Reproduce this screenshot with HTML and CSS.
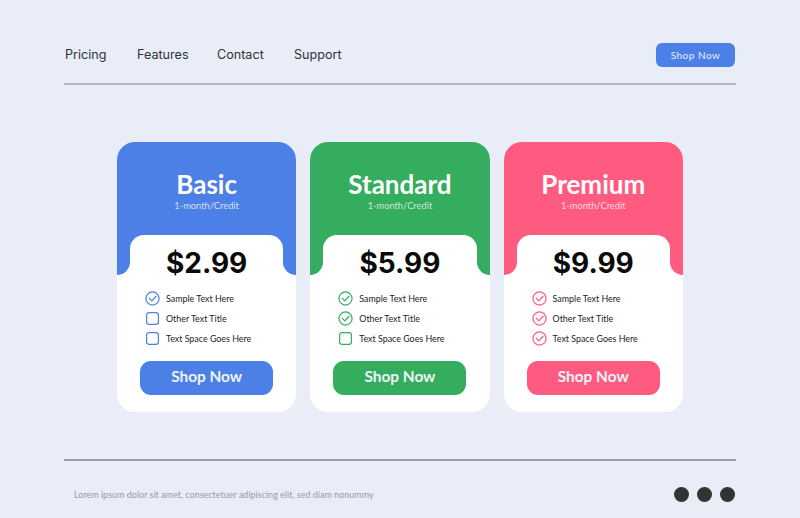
FILE: index.html
```html
<!DOCTYPE html>
<html lang="en">
<head>
    <meta charset="UTF-8">
    <meta name="viewport" content="width=device-width, initial-scale=1.0">
    <title>Pricing</title>
    <link rel="stylesheet" href="styles.css">
</head>
<body>
    <svg class="defs" width="0" height="0">
        <symbol id="icon-on" viewBox="0 0 16 16">
            <circle cx="8" cy="8" r="7" fill="none" stroke="currentColor" stroke-width="1.3"/>
            <path d="M4.4 7.6 7.3 10.5 11.8 5.6" fill="none" stroke="currentColor" stroke-width="1.3" stroke-linecap="round" stroke-linejoin="round"/>
        </symbol>
        <symbol id="icon-off" viewBox="0 0 16 16">
            <rect x="1.7" y="1.7" width="12.6" height="12.6" rx="2.6" fill="none" stroke="currentColor" stroke-width="1.3"/>
        </symbol>
    </svg>

    <header class="topbar">
        <nav class="nav">
            <a class="nav-pricing">Pricing</a>
            <a class="nav-features">Features</a>
            <a class="nav-contact">Contact</a>
            <a>Support</a>
        </nav>
        <button type="button" class="top-btn">Shop Now</button>
    </header>

    <main class="plans">
        <section class="plan plan-blue">
            <div class="plan-head">
                <h2>Basic</h2>
                <p>1-month/Credit</p>
            </div>
            <div class="price-row">
                <span class="flank flank-left"></span>
                <div class="price">$2.99</div>
                <span class="flank flank-right"></span>
            </div>
            <ul class="features">
                <li><svg class="icon"><use href="#icon-on"/></svg><span>Sample Text Here</span></li>
                <li><svg class="icon"><use href="#icon-off"/></svg><span>Other Text Title</span></li>
                <li><svg class="icon"><use href="#icon-off"/></svg><span>Text Space Goes Here</span></li>
            </ul>
            <button type="button" class="buy">Shop Now</button>
        </section>

        <section class="plan plan-green">
            <div class="plan-head">
                <h2>Standard</h2>
                <p>1-month/Credit</p>
            </div>
            <div class="price-row">
                <span class="flank flank-left"></span>
                <div class="price">$5.99</div>
                <span class="flank flank-right"></span>
            </div>
            <ul class="features">
                <li><svg class="icon"><use href="#icon-on"/></svg><span>Sample Text Here</span></li>
                <li><svg class="icon"><use href="#icon-on"/></svg><span>Other Text Title</span></li>
                <li><svg class="icon"><use href="#icon-off"/></svg><span>Text Space Goes Here</span></li>
            </ul>
            <button type="button" class="buy">Shop Now</button>
        </section>

        <section class="plan plan-pink">
            <div class="plan-head">
                <h2>Premium</h2>
                <p>1-month/Credit</p>
            </div>
            <div class="price-row">
                <span class="flank flank-left"></span>
                <div class="price">$9.99</div>
                <span class="flank flank-right"></span>
            </div>
            <ul class="features">
                <li><svg class="icon"><use href="#icon-on"/></svg><span>Sample Text Here</span></li>
                <li><svg class="icon"><use href="#icon-on"/></svg><span>Other Text Title</span></li>
                <li><svg class="icon"><use href="#icon-on"/></svg><span>Text Space Goes Here</span></li>
            </ul>
            <button type="button" class="buy">Shop Now</button>
        </section>
    </main>

    <footer class="bottombar">
        <p>Lorem ipsum dolor sit amet, consectetuer adipiscing elit, sed diam nonummy</p>
        <div class="dots">
            <span></span>
            <span></span>
            <span></span>
        </div>
    </footer>
</body>
</html>
```

FILE: styles.css
```css
body {
    margin: 0;
    height: 518px;
    overflow: hidden;
    background-color: #e9edf7;
    font-family: Lato, sans-serif;
    color: #222222;
}
.defs {
    display: block;
    height: 0;
}
.topbar {
    margin: 0 64px;
    height: 40px;
    padding: 43px 1px 0;
    border-bottom: 2px solid #b5b8c4;
    display: flex;
    justify-content: space-between;
    align-items: flex-start;
}
.nav {
    display: flex;
    font-family: Inter, sans-serif;
    font-size: 12.6px;
    line-height: 23px;
    color: #303238;
}
.nav a {
    display: block;
}
.nav-pricing {
    width: 72px;
}
.nav-features {
    width: 80px;
}
.nav-contact {
    width: 77px;
}
.top-btn {
    width: 79px;
    height: 24px;
    padding: 0;
    border: none;
    border-radius: 6px;
    background-color: #4d80e6;
    color: #e9effb;
    font-family: Lato, sans-serif;
    font-size: 10px;
    letter-spacing: 0.5px;
}
.plans {
    display: flex;
    gap: 14px;
    margin: 57px 0 0 117px;
}
.plan {
    width: 179.3px;
    height: 270px;
    background-color: #ffffff;
    border-radius: 18px;
    overflow: hidden;
    display: flex;
    flex-direction: column;
}
.plan-blue {
    --accent: #4d80e6;
}
.plan-green {
    --accent: #35ad5e;
}
.plan-pink {
    --accent: #ff5b80;
}
.plan-head {
    height: 93px;
    background-color: var(--accent);
    color: #ffffff;
    text-align: center;
    box-sizing: border-box;
    padding-top: 26px;
}
.plan-head h2 {
    margin: 0;
    font-size: 26px;
    font-weight: 700;
    line-height: 32px;
}
.plan-head p {
    margin: 0;
    font-size: 9.3px;
    line-height: 12px;
    color: rgba(255, 255, 255, 0.75);
}
.price-row {
    display: flex;
    height: 40px;
    /* fills behind the rounded top corners of the price panel */
    background: linear-gradient(var(--accent) 14px, transparent 14px);
}
.flank {
    width: 13px;
    background-color: var(--accent);
}
.flank-left {
    border-bottom-right-radius: 13px;
}
.flank-right {
    border-bottom-left-radius: 13px;
}
.price {
    flex: 1;
    background-color: #ffffff;
    border-radius: 14px 14px 0 0;
    text-align: center;
    font-family: Inter, "Liberation Sans", sans-serif;
    font-size: 28px;
    font-weight: 700;
    line-height: 56px;
    color: #0a0a0a;
}
.features {
    list-style: none;
    margin: 13px 0 0 28px;
    padding: 0;
}
.features li {
    display: flex;
    align-items: center;
    gap: 6px;
    height: 20px;
    font-size: 8.9px;
}
.icon {
    width: 15px;
    height: 15px;
    color: var(--accent);
}
.buy {
    align-self: center;
    width: 133px;
    height: 34px;
    margin-top: 13px;
    padding: 0 0 5px;
    border: none;
    border-radius: 11px;
    background-color: var(--accent);
    color: #eef2fb;
    font-family: Lato, sans-serif;
    font-size: 15.4px;
    font-weight: 700;
}
.bottombar {
    margin: 47px 64px 0;
    padding: 26px 1px 0 10px;
    border-top: 2px solid #9b9ea9;
    display: flex;
    justify-content: space-between;
    align-items: center;
}
.bottombar p {
    margin: 0;
    font-size: 9px;
    color: #979aa6;
}
.dots {
    display: flex;
    gap: 8px;
}
.dots span {
    width: 15px;
    height: 15px;
    border-radius: 50%;
    background-color: #333333;
}
```
